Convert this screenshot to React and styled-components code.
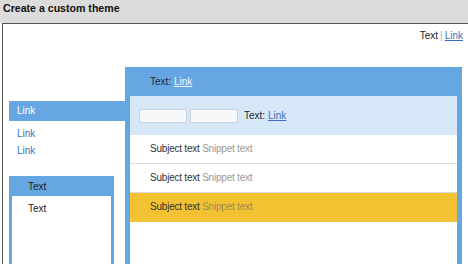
import styled, { createGlobalStyle } from "styled-components";

const GlobalStyle = createGlobalStyle`
  body {
    margin: 0;
    background: #ffffff;
    font-family: "Liberation Sans", Arial, sans-serif;
    overflow: hidden;
  }
`;

const BLUE = "#66a6e2";

const Page = styled.div`
  height: 264px;
  overflow: hidden;
`;

const Header = styled.div`
  height: 23px;
  background-color: #dcdcdc;
  padding-left: 3px;
  font-size: 10.6px;
  font-weight: 700;
  line-height: 17px;
  color: #111;
`;

const Frame = styled.div`
  margin-left: 2px;
  border-left: 1px solid #555;
  border-top: 1px solid #555;
  height: 240px;
  overflow: hidden;
`;

const TopLinks = styled.div`
  height: 43px;
  box-sizing: border-box;
  padding: 6px 5px 0 0;
  text-align: right;
  font-size: 10px;
  line-height: 12px;
  color: #222;
`;

const Sep = styled.span`
  color: #8fb0d8;
  margin: 0 2px;
`;

const A = styled.a`
  color: ${(p) => (p.$light ? "#eef4fc" : "#3c6fc4")};
  text-decoration: ${(p) => (p.$plain ? "none" : "underline")};
  cursor: pointer;
`;

const Columns = styled.div`
  display: flex;
  align-items: flex-start;
`;

const Sidebar = styled.div`
  width: 122px;
  box-sizing: border-box;
  padding: 34px 0 0 6px;
  font-size: 10px;
`;

const NavItem = styled.div`
  height: 20px;
  line-height: 20px;
  padding-left: 8px;
  background-color: ${(p) => (p.$active ? BLUE : "transparent")};
  color: ${(p) => (p.$active ? "#fff" : "#3c6fc4")};
`;

const NavLinks = styled.div`
  padding: 4px 0 0 8px;
  line-height: 17px;
`;

const Box = styled.div`
  margin-top: 17px;
  width: 105px;
  height: 120px;
  box-sizing: border-box;
  border: 3px solid ${BLUE};
  border-top: none;
`;

const BoxHead = styled.div`
  height: 20px;
  line-height: 21px;
  margin: 0 -3px;
  padding-left: 19px;
  background-color: ${BLUE};
  color: #222;
`;

const BoxBody = styled.div`
  padding: 6px 0 0 16px;
  line-height: 13px;
  color: #222;
`;

const Panel = styled.div`
  width: 337px;
  height: 240px;
  box-sizing: border-box;
  border-left: 5px solid ${BLUE};
  border-right: 5px solid ${BLUE};
  font-size: 10px;
`;

const PanelHead = styled.div`
  height: 29px;
  line-height: 29px;
  margin: 0 -5px;
  padding-left: 25px;
  background-color: ${BLUE};
  color: #1d2a38;
`;

const Toolbar = styled.div`
  height: 39px;
  display: flex;
  align-items: center;
  gap: 3px;
  padding-left: 9px;
  background-color: #d6e8f8;
  color: #222;
`;

const Field = styled.div`
  width: 46px;
  height: 12px;
  background: #f6f8fa;
  border: 1px solid #c6d4e2;
  border-radius: 1px;
`;

const ToolText = styled.span`
  margin-left: 3px;
`;

const Row = styled.div`
  height: 28px;
  line-height: 28px;
  padding-left: 20px;
  font-size: 10px;
  letter-spacing: -0.22px;
  background-color: ${(p) => (p.$selected ? "#f2c233" : "#fff")};
  border-bottom: 1px solid ${(p) => (p.$selected ? "#f2c233" : "#dcdcdc")};
  color: #333;
`;

const Snippet = styled.span`
  color: ${(p) => (p.$selected ? "#a08a50" : "#999")};
`;

const rows = [false, false, true];

export default function App() {
  return (
    <Page>
      <GlobalStyle />
      <Header>Create a custom theme</Header>
      <Frame>
        <TopLinks>
          Text<Sep>|</Sep>
          <A>Link</A>
        </TopLinks>
        <Columns>
          <Sidebar>
            <NavItem $active>Link</NavItem>
            <NavLinks>
              <div>
                <A $plain>Link</A>
              </div>
              <div>
                <A $plain>Link</A>
              </div>
            </NavLinks>
            <Box>
              <BoxHead>Text</BoxHead>
              <BoxBody>Text</BoxBody>
            </Box>
          </Sidebar>
          <Panel>
            <PanelHead>
              Text: <A $light>Link</A>
            </PanelHead>
            <Toolbar>
              <Field />
              <Field />
              <ToolText>
                Text: <A>Link</A>
              </ToolText>
            </Toolbar>
            {rows.map((sel, i) => (
              <Row key={i} $selected={sel}>
                Subject text <Snippet $selected={sel}>Snippet text</Snippet>
              </Row>
            ))}
          </Panel>
        </Columns>
      </Frame>
    </Page>
  );
}
